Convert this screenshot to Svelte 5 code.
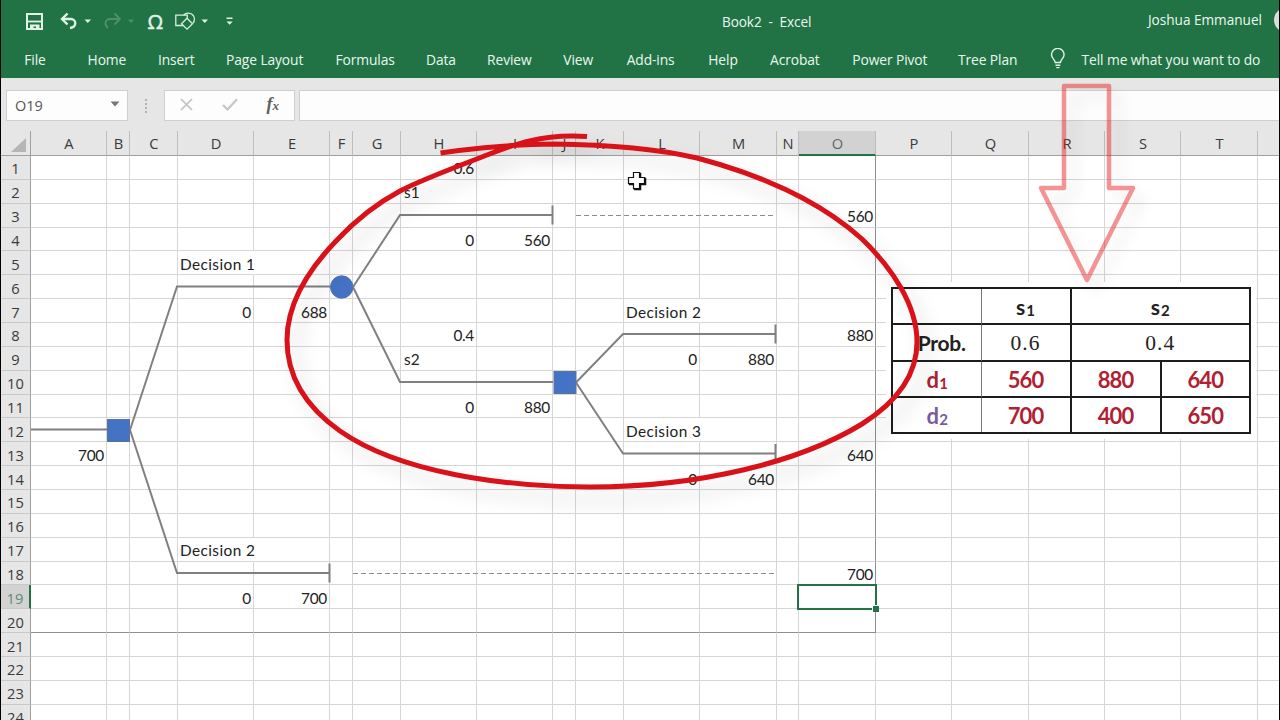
<script lang="ts">
  interface Tab {
    label: string;
    width: number;
  }

  interface Cell {
    text: string;
    align: 'left' | 'right';
  }

  const tabs: Tab[] = [
    { label: 'File', width: 22 },
    { label: 'Home', width: 40 },
    { label: 'Insert', width: 35 },
    { label: 'Page Layout', width: 78 },
    { label: 'Formulas', width: 59 },
    { label: 'Data', width: 29 },
    { label: 'Review', width: 44 },
    { label: 'View', width: 30 },
    { label: 'Add-ins', width: 51 },
    { label: 'Help', width: 30 },
    { label: 'Acrobat', width: 50 },
    { label: 'Power Pivot', width: 76 },
    { label: 'Tree Plan', width: 56 }
  ];

  // Column name and the x of its right gridline
  const columns: [string, number][] = [
    ['A', 107], ['B', 130], ['C', 178], ['D', 254], ['E', 330],
    ['F', 353], ['G', 401], ['H', 477], ['I', 553], ['J', 576],
    ['K', 624], ['L', 700], ['M', 777], ['N', 799], ['O', 876],
    ['P', 952], ['Q', 1029], ['R', 1105], ['S', 1181], ['T', 1258], ['', 1334]
  ];
  const template = columns
    .map(([, x], i) => `${x - (i ? columns[i - 1][1] : 31)}px`)
    .join(' ');

  const rows = Array.from({ length: 24 }, (_, i) => i + 1);

  const left = (text: string): Cell => ({ text, align: 'left' });
  const right = (text: string): Cell => ({ text, align: 'right' });

  const cells: Record<string, Cell> = {
    H1: right('0.6'),
    H2: left('s1'),
    O3: right('560'),
    H4: right('0'),
    I4: right('560'),
    D5: left('Decision 1'),
    D7: right('0'),
    E7: right('688'),
    L7: left('Decision 2'),
    H8: right('0.4'),
    O8: right('880'),
    H9: left('s2'),
    L9: right('0'),
    M9: right('880'),
    H11: right('0'),
    I11: right('880'),
    L12: left('Decision 3'),
    A13: right('700'),
    O13: right('640'),
    L14: right('0'),
    M14: right('640'),
    D17: left('Decision 2'),
    O18: right('700'),
    D19: right('0'),
    E19: right('700')
  };
</script>

<div class="window">
  <header class="titlebar">
    <svg class="quick-access" width="240" height="42" viewBox="0 0 240 42">
      <!-- Save -->
      <path d="M27 14h15v15H27z" fill="none" stroke="#e2f3e6" stroke-width="2" />
      <path d="M27 21.500h15" stroke="#e2f3e6" stroke-width="1.800" />
      <path d="M30 24.500h9.500V29H36v-2.500h-2.500V29H30z" fill="#e2f3e6" />
      <!-- Undo -->
      <path d="M62 19h9a4.300 4.300 0 0 1 4.300 4.300c0 2.300-1.800 4.200-5.300 4.700" fill="none" stroke="#e2f3e6" stroke-width="2.300" />
      <path d="M67.500 13.500L62 19l5.500 5.500" fill="none" stroke="#e2f3e6" stroke-width="2.400" />
      <path d="M84.500 19.500h6.500l-3.200 3.500z" fill="#e2f3e6" />
      <!-- Redo -->
      <path d="M119 19h-9a4.200 4.200 0 0 0-4.500 4.300c0 2 .8 3.500 2.500 4.500" fill="none" stroke="#4f9069" stroke-width="1.800" />
      <path d="M114.500 13.500l5.500 5.500-5.500 5.500" fill="none" stroke="#4f9069" stroke-width="1.800" />
      <path d="M128 19.500h6l-3 3.500z" fill="#4f9069" />
      <text x="155.300" y="28.500" text-anchor="middle" class="omega">Ω</text>
      <!-- Shapes -->
      <g fill="none" stroke="#d9eede" stroke-width="1.300">
        <path d="M183 25.500h-7.200V15.200h11.500v3" />
        <path d="M183.500 15.200c2.500-2.800 7.500-2.800 9.800.3 1.600 2.500 1.300 5.500-.3 7.500" />
        <path d="M187 18.200l5.500 5.500-5.500 5.500-5.500-5.500z" />
      </g>
      <path d="M201.500 19.500h6.500l-3.200 3.500z" fill="#e2f3e6" />
      <path d="M226.500 17.500h6v1.500h-6zM226.500 21.500h6.200l-3.100 3.300z" fill="#e2f3e6" />
    </svg>
    <span class="title">Book2&nbsp; -&nbsp; Excel</span>
    <div class="account">
      <span>Joshua Emmanuel</span>
      <i class="avatar"></i>
    </div>
  </header>

  <nav class="tabs">
    {#each tabs as tab}
      <span class="tab" style="width: {tab.width}px">{tab.label}</span>
    {/each}
    <div class="tell-me">
      <svg width="16" height="22" viewBox="0 0 16 22">
        <path
          d="M5.200 14.500c0-3-3.700-4-3.700-7.800a6.300 6.300 0 0 1 12.600 0c0 3.800-3.700 4.800-3.700 7.800zM5.500 17.300h4.800M6.300 19.600h3.200"
          fill="none"
          stroke="#e2f3e6"
          stroke-width="1.400"
        />
      </svg>
      <span>Tell me what you want to do</span>
    </div>
  </nav>

  <div class="formula-bar">
    <div class="name-box">
      <span>O19</span>
      <svg width="10" height="6" viewBox="0 0 10 6"><path d="M.5.500h9L5 5.500z" fill="#777" /></svg>
    </div>
    <div class="grip"><i></i><i></i><i></i><i></i></div>
    <div class="formula-tools">
      <svg width="13" height="13" viewBox="0 0 13 13">
        <path d="M1 1l11 11M12 1L1 12" stroke="#c2c2c2" stroke-width="1.700" />
      </svg>
      <svg width="16" height="13" viewBox="0 0 16 13">
        <path d="M1 7l4.500 4.500L15 1.200" fill="none" stroke="#c6c6c6" stroke-width="2.200" />
      </svg>
      <span class="fx">f<small>x</small></span>
    </div>
    <div class="formula-input"></div>
  </div>

  <main class="sheet">
    <div class="column-head">
      <div class="corner">
        <svg width="15" height="14" viewBox="0 0 15 14"><path d="M15 0v14H0z" fill="#b5b5b5" /></svg>
      </div>
      <div class="columns" style="grid-template-columns: {template}">
        {#each columns as [name]}
          <div class="column" class:active={name === 'O'}>{name}</div>
        {/each}
      </div>
    </div>

    {#each rows as row}
      <div class="row">
        <div class="row-number" class:active={row === 19}>{row}</div>
        <div class="cells" style="grid-template-columns: {template}">
          {#each columns as [name]}
            {@const cell = cells[name + row]}
            <div
              class="cell"
              class:right={cell?.align === 'right'}
              class:spill={cell?.text.startsWith('Decision')}
              class:print-right={name === 'O' && row <= 20}
              class:print-bottom={row === 20 && columns.findIndex((c) => c[0] === name) <= 14}
              class:selected={name === 'O' && row === 19}
            >
              {cell?.text ?? ''}
            </div>
          {/each}
        </div>
      </div>
    {/each}
  </main>

  <!-- Decision tree drawn over the sheet -->
  <svg class="overlay" width="1280" height="720" viewBox="0 0 1280 720">
    <g fill="none" stroke="#808080" stroke-width="2">
      <path d="M31 429.500H107" />
      <path d="M130 430L177 286.500H330" />
      <path d="M130 430L177 573H329.500M329.500 563.500v19" />
      <path d="M353 287L400 215H552.500M552.500 205.500v19" />
      <path d="M353 287L400 382H553" />
      <path d="M576 382.500L623 334H775.500M775.500 324.500v19" />
      <path d="M576 382.500L623 453.500H775.500M775.500 444v19" />
    </g>
    <g stroke="#8c8c8c" stroke-width="1" stroke-dasharray="5 3">
      <path d="M576 215.500H774" />
      <path d="M353 573.500H776" />
    </g>
    <g fill="#4472c4" stroke="#5d7396" stroke-width="1">
      <rect x="107.500" y="419.500" width="22" height="22" />
      <circle cx="341.700" cy="287" r="11.200" stroke="#4f74b5" />
      <rect x="554" y="371.500" width="22" height="22" />
    </g>
  </svg>

  <div class="payoff">
    <div></div>
    <div class="state">s<small>1</small></div>
    <div class="state wide">s<small>2</small></div>
    <div class="prob">Prob.</div>
    <div class="math">0.6</div>
    <div class="math wide">0.4</div>
    <div class="value">d<small>1</small></div>
    <div class="value">560</div>
    <div class="value">880</div>
    <div class="value split">640</div>
    <div class="value purple">d<small>2</small></div>
    <div class="value">700</div>
    <div class="value">400</div>
    <div class="value split">650</div>
  </div>

  <!-- Presenter's marks -->
  <svg class="overlay" width="1280" height="720" viewBox="0 0 1280 720">
    <path
      class="ring"
      d="M587 136.500C540 133 510 146 478 158.500C440 173 415 183 400 191C372 206 352 224 337 240C304 274 287 308 287 340C287 376 306 407 340 431C400 473 505 487 590 487C700 487 800 462 862 424C900 400 917 372 917 342C917 305 892 268 862 239C820 201 765 176 697 158C650 147 600 144.500 553 144C515 144.500 480 147 440.500 153"
    />
    <path class="arrow" d="M1064 86H1109V188H1133L1087 280L1041 188H1064Z" />
    <!-- Cell cursor -->
    <path d="M634.500 173.500h6v5h5v6h-5v5h-6v-5h-5v-6h5z" fill="#111" stroke="#111" stroke-width="1.500" />
    <path d="M633.500 172.500h6v5h5v6h-5v5h-6v-5h-5v-6h5z" fill="#fff" stroke="#111" stroke-width="1.200" />
  </svg>
</div>

<style>
  :global(body) {
    margin: 0;
  }

  .window {
    position: relative;
    box-sizing: border-box;
    width: 1280px;
    height: 720px;
    overflow: hidden;
    display: flex;
    flex-direction: column;
    background: #e6e6e6;
    border-left: 1px solid #000;
    border-right: 1px solid #000;
    font-family: 'Open Sans', 'Noto Sans', sans-serif;
    color: #333;
  }

  .titlebar {
    flex: none;
    height: 42px;
    display: flex;
    align-items: center;
    background: #217346;
    color: #ecf7ef;
    font-size: 13.6px;
  }

  .quick-access {
    flex: none;
    margin-left: -1px;
  }

  .omega {
    fill: #e2f3e6;
    stroke: #e2f3e6;
    stroke-width: 0.5;
    font: 20px 'Open Sans', sans-serif;
  }

  .title {
    width: 94px;
    margin-left: 482px;
    white-space: nowrap;
    letter-spacing: -0.1px;
  }

  .account {
    flex: 1;
    display: flex;
    align-items: center;
    justify-content: flex-end;
    gap: 12px;
    margin: -3px -19px 0 0;
    white-space: nowrap;
  }

  .avatar {
    width: 24px;
    height: 24px;
    border-radius: 50%;
    background: #d9dedb;
  }

  .tabs {
    flex: none;
    height: 36px;
    box-sizing: border-box;
    padding: 0 0 2px 23px;
    display: flex;
    align-items: center;
    gap: 31.9px;
    background: #217346;
    color: #ecf7ef;
    font-size: 13.8px;
    letter-spacing: -0.1px;
  }

  .tab {
    flex: none;
    display: flex;
    justify-content: center;
    white-space: nowrap;
  }

  .tab:first-child {
    margin-right: 9px;
  }

  .tell-me {
    display: flex;
    align-items: center;
    gap: 16px;
    margin-left: 2px;
    white-space: nowrap;
  }

  .formula-bar {
    flex: none;
    height: 53px;
    box-sizing: border-box;
    padding: 12px 0 10px 5px;
    display: flex;
  }

  .name-box,
  .formula-tools,
  .formula-input {
    box-sizing: border-box;
    display: flex;
    align-items: center;
    background: #fdfdfd;
    border: 1px solid #cfcfcf;
  }

  .name-box {
    width: 122px;
    padding: 0 7px 0 8px;
    justify-content: space-between;
    font-size: 14.5px;
    color: #555;
  }

  .name-box svg {
    margin-top: -4px;
  }

  .grip {
    width: 36px;
    display: flex;
    flex-direction: column;
    align-items: center;
    justify-content: center;
    gap: 2px;
  }

  .grip i {
    width: 2px;
    height: 2px;
    background: #b3b3b3;
  }

  .formula-tools {
    width: 131px;
    padding: 0 15px 2px 15px;
    justify-content: space-between;
  }

  .fx {
    font: italic bold 18px 'Liberation Serif', serif;
    color: #606060;
  }

  .fx small {
    font-size: 13px;
  }

  .formula-input {
    flex: 1;
    margin-left: 4px;
    border-right: 0;
  }

  .sheet {
    flex: none;
    font-size: 14.7px;
  }

  .column-head {
    height: 25px;
    display: flex;
  }

  .corner {
    flex: none;
    box-sizing: border-box;
    width: 30px;
    padding: 7px 0 0 10px;
    border-right: 1px solid #a0a0a0;
    border-bottom: 1px solid #a0a0a0;
    line-height: 0;
  }

  .columns {
    display: grid;
  }

  .column {
    box-sizing: border-box;
    padding: 0 0 1px 1px;
    display: flex;
    align-items: center;
    justify-content: center;
    color: #3a3a3a;
    border-right: 1px solid #bdbdbd;
    border-bottom: 1px solid #a0a0a0;
  }

  .column.active {
    padding-bottom: 0;
    background: #d2d2d2;
    border-bottom: 2px solid #217346;
    color: #5b6b62;
  }

  .row {
    height: 23.86px;
    display: flex;
  }

  .row-number {
    flex: none;
    box-sizing: border-box;
    width: 30px;
    display: flex;
    align-items: center;
    justify-content: center;
    padding: 2px 0 0 0;
    border-right: 1px solid #a0a0a0;
    border-bottom: 1px solid #c9c9c9;
    color: #3a3a3a;
  }

  .row-number.active {
    background: #d2d2d2;
    border-right: 2px solid #217346;
    color: #5f8b72;
  }

  .cells {
    display: grid;
  }

  .cell {
    position: relative;
    box-sizing: border-box;
    min-width: 0;
    padding: 2px 2px 0 3px;
    display: flex;
    align-items: center;
    white-space: nowrap;
    background: #fff;
    border-right: 1px solid #d6d6d6;
    border-bottom: 1px solid #d6d6d6;
    font-family: Lato, sans-serif;
    font-size: 15.4px;
    color: #222;
  }

  .cell.right {
    justify-content: flex-end;
    letter-spacing: -0.3px;
  }

  .cell.spill {
    z-index: 1;
    padding-left: 2px;
    border-right-color: #fff;
    letter-spacing: 0.4px;
  }

  .cell.print-right {
    border-right-color: #8f8f8f;
  }

  .cell.print-bottom {
    border-bottom-color: #8f8f8f;
  }

  .cell.selected::before {
    content: '';
    position: absolute;
    z-index: 2;
    inset: -1px -2px -2px -2px;
    border: 2px solid #217346;
  }

  .cell.selected::after {
    content: '';
    position: absolute;
    z-index: 3;
    right: -4px;
    bottom: -4px;
    width: 6px;
    height: 6px;
    background: #217346;
    border: 1px solid #fff;
    border-width: 1px 0 0 1px;
  }

  .overlay {
    position: absolute;
    top: 0;
    left: -1px;
    z-index: 4;
  }

  /* Payoff table pasted over the cells */
  .payoff {
    position: absolute;
    z-index: 4;
    left: 890px;
    top: 287px;
    box-sizing: border-box;
    width: 360px;
    height: 147px;
    display: grid;
    grid-template-columns: 88.5px 90px 90px 1fr;
    grid-template-rows: 36px 37px 36px 1fr;
    background: #fff;
    border: 2px solid #1c1c1c;
    box-shadow: 0 0 0 5px #fff;
    font-family: Lato, sans-serif;
    font-weight: bold;
    color: #222;
  }

  .payoff > div {
    box-sizing: border-box;
    display: flex;
    align-items: center;
    justify-content: center;
    border-bottom: 2px solid #1c1c1c;
    border-right: 2px solid #1c1c1c;
  }

  .payoff > div:nth-child(1),
  .payoff > .prob,
  .payoff > div:nth-child(7),
  .payoff > div:nth-child(11) {
    border-right: 1px solid #777;
  }

  .payoff > .wide {
    grid-column: span 2;
    border-right: 0;
  }

  .payoff > .split {
    border-right: 0;
  }

  .payoff > div:nth-child(n + 11) {
    border-bottom: 0;
  }

  .state {
    font-size: 21px;
  }

  .prob {
    padding-left: 10px;
    font-size: 21px;
    letter-spacing: -0.3px;
  }

  .payoff .math {
    padding-top: 2px;
    font: 21.5px 'Liberation Serif', serif;
    letter-spacing: 1px;
  }

  .value {
    font-size: 22px;
    letter-spacing: -0.9px;
    color: #b01f33;
  }

  .value.purple {
    color: #7a5a9c;
  }

  .payoff small {
    margin: 7px 0 0 1px;
    font-size: 15px;
  }

  .ring {
    fill: none;
    stroke: #d9121a;
    stroke-width: 5;
    filter: drop-shadow(9px 12px 9px rgba(0, 0, 0, 0.15));
  }

  .arrow {
    fill: none;
    stroke: #e81c1c;
    stroke-width: 4.5;
    stroke-linejoin: round;
    opacity: 0.47;
    filter: drop-shadow(9px 10px 8px rgba(0, 0, 0, 0.2));
  }
</style>
